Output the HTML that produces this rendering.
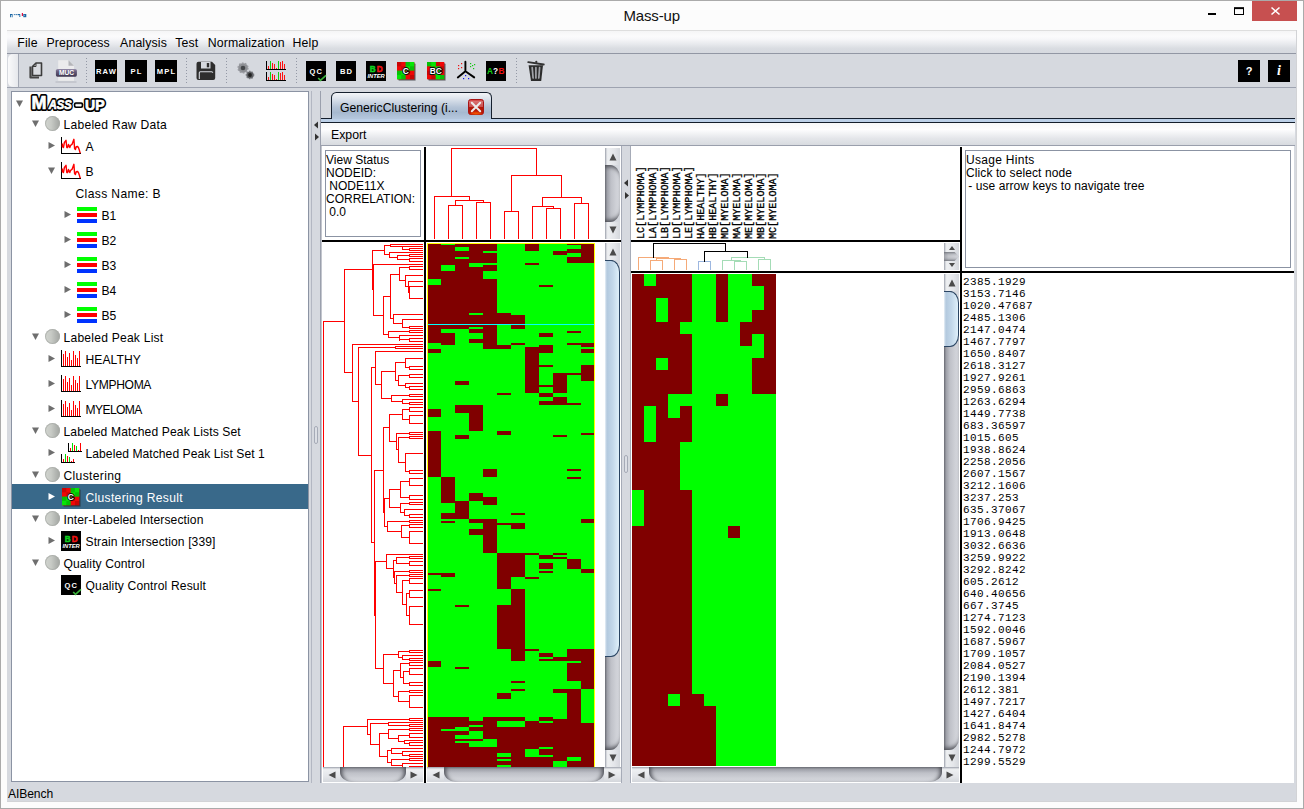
<!DOCTYPE html><html><head><meta charset="utf-8"><title>Mass-up</title><style>
*{box-sizing:border-box;margin:0;padding:0}
html,body{width:1304px;height:809px;overflow:hidden}
body{background:#fcfcfc;font-family:"Liberation Sans",sans-serif;font-size:12px;color:#000;position:relative}
.abs{position:absolute}
.t{position:absolute;white-space:pre;line-height:14px;font-size:12.1px}
</style></head><body>
<div class="abs" style="left:0px;top:0px;width:1304px;height:809px;border:1px solid #aaaaaa;"></div>
<div class="t" style="left:623.4px;top:7.5px;font-size:15px;line-height:16px;color:#111;letter-spacing:-.15px">Mass-up</div>
<div class="abs" style="left:1252px;top:1px;width:45px;height:20px;background:#c75050"></div>
<svg class="abs" style="left:1205px;top:0" width="95" height="24"><path d="M3 14h8" stroke="#000" stroke-width="2"/><rect x="29.500" y="8" width="9" height="6.500" fill="none" stroke="#000" stroke-width="1"/><path d="M29 8.200h10" stroke="#000" stroke-width="1.800"/><path d="M66.500 7.500l8 7m0 -7l-8 7" stroke="#fff" stroke-width="1.6"/></svg>
<svg class="abs" style="left:9px;top:12px" width="19" height="7"><g fill="#1a66a4"><path d="M1 2h2.600v3.200h-.9v-2.300h-.8v2.300h-.9z"/><rect x="4.800" y="2" width="1.600" height="1.100" opacity=".75"/><rect x="6.800" y="2" width="1.600" height="1.100" opacity=".8"/><rect x="8.800" y="2" width="2.400" height="1.200"/><rect x="10.200" y="3.200" width="1.200" height="1.800" opacity=".8"/><rect x="14.300" y="2" width="3" height="3.200"/></g><rect x="14.900" y="2.900" width=".8" height="1.200" fill="#9cc4e4"/><rect x="12.800" y="1" width="1.200" height="3" fill="#e01040"/></svg>
<div class="abs" style="left:7px;top:30px;width:1290px;height:772px;background:#d6d9df;border-right:1px solid #d2d3d6;border-bottom:1px solid #d2d3d6"></div>
<div class="abs" style="left:7px;top:30px;width:1289px;height:23px;background:linear-gradient(#f5f5f6 0%,#fbfbfc 24%,#f7f7f9 36%,#e7e9ed 60%,#d9dce1 80%,#d6d9df 100%);border-top:1px solid #dedede"></div>
<div class="abs" style="left:7px;top:53px;width:1289px;height:1px;background:#9297a4"></div>
<div class="t" style="left:17.3px;top:36px;font-size:12.3px;letter-spacing:.13px">File</div>
<div class="t" style="left:46.4px;top:36px;font-size:12.3px;letter-spacing:.13px">Preprocess</div>
<div class="t" style="left:120.1px;top:36px;font-size:12.3px;letter-spacing:.13px">Analysis</div>
<div class="t" style="left:175.2px;top:36px;font-size:12.3px;letter-spacing:.13px">Test</div>
<div class="t" style="left:207.8px;top:36px;font-size:12.3px;letter-spacing:.13px">Normalization</div>
<div class="t" style="left:292.6px;top:36px;font-size:12.3px;letter-spacing:.13px">Help</div>
<div class="abs" style="left:7px;top:54px;width:1289px;height:33px;background:#d6d9df"></div>
<div class="abs" style="left:7px;top:87px;width:1289px;height:1px;background:#9ea3b0"></div>
<div class="abs" style="left:8px;top:54px;width:11px;height:33px;border-radius:5px 0 0 5px;background:linear-gradient(90deg,#fafafb,#e6e8ec);border-right:1px solid #a3a8b4"></div>
<svg class="abs" style="left:27px;top:60px" width="18" height="20" viewBox="0 0 18 20"><path d="M3.500 6.500v11h8.500" fill="none" stroke="#444" stroke-width="2.200" stroke-linejoin="round"/><path d="M5.500 15.500v-9l3.500 -3.500h5.500v12.500z" fill="#d9dbe0" stroke="#3c3c3c" stroke-width="1.600" stroke-linejoin="round"/><path d="M5.500 6.500h3.500v-3.500" fill="none" stroke="#3c3c3c" stroke-width="1"/></svg>
<svg class="abs" style="left:54px;top:59px" width="24" height="24" viewBox="0 0 24 24"><defs><linearGradient id="mb" x1="0" y1="0" x2="0" y2="1"><stop offset="0" stop-color="#9a92ae"/><stop offset=".3" stop-color="#6a607e"/><stop offset="1" stop-color="#3e3650"/></linearGradient></defs><path d="M4.200 1.200h10.300l5.500 5.500v15h-15.800z" fill="#ececed"/><path d="M14.500 1.200v5.500h5.500z" fill="#b4b5b9"/><rect x="1.900" y="9.900" width="21" height="7.800" rx="1.600" fill="url(#mb)"/><text x="5" y="16.200" font-family="Liberation Sans" font-weight="bold" font-size="6.600" fill="#fff" textLength="15" lengthAdjust="spacing">MUC</text><path d="M1.500 23h21" stroke="#b4b6be" stroke-width="1"/></svg>
<div class="abs" style="left:86px;top:58px;width:1px;height:26px;background:repeating-linear-gradient(#9499a6 0 1px,transparent 1px 3px)"></div>
<svg class="abs" style="left:95px;top:60px" width="22" height="22"><rect width="22" height="22" fill="#000"/><text x="1.0" y="14" font-family="Liberation Sans" font-weight="bold" font-size="7.6" fill="#fff" textLength="20" lengthAdjust="spacing">RAW</text></svg>
<svg class="abs" style="left:125px;top:60px" width="22" height="22"><rect width="22" height="22" fill="#000"/><text x="5.5" y="14" font-family="Liberation Sans" font-weight="bold" font-size="7.6" fill="#fff" textLength="11" lengthAdjust="spacing">PL</text></svg>
<svg class="abs" style="left:155px;top:60px" width="22" height="22"><rect width="22" height="22" fill="#000"/><text x="1.75" y="14" font-family="Liberation Sans" font-weight="bold" font-size="7.6" fill="#fff" textLength="18.5" lengthAdjust="spacing">MPL</text></svg>
<div class="abs" style="left:186px;top:58px;width:1px;height:26px;background:repeating-linear-gradient(#9499a6 0 1px,transparent 1px 3px)"></div>
<svg class="abs" style="left:196px;top:61px" width="20" height="20" viewBox="0 0 20 20"><path d="M2.500 .800h13.500l3.200 3.200v13a2 2 0 0 1 -2 2h-14.700a2 2 0 0 1 -2 -2v-14.200a2 2 0 0 1 2 -2z" fill="#2e2e2e"/><rect x="5" y="1" width="9.500" height="6.500" fill="#d6d9df"/><rect x="10.800" y="2" width="2.400" height="4.300" fill="#2e2e2e"/><path d="M3.300 18v-6.200a1 1 0 0 1 1 -1h11.400a1 1 0 0 1 1 1" fill="none" stroke="#d6d9df" stroke-width="1.100"/></svg>
<div class="abs" style="left:226px;top:58px;width:1px;height:26px;background:repeating-linear-gradient(#9499a6 0 1px,transparent 1px 3px)"></div>
<svg class="abs" style="left:236px;top:61px" width="20" height="20" viewBox="0 0 20 20"><circle cx="7" cy="7" r="4.800" fill="#8d8f94" stroke="#9a9ca2" stroke-width="1.600" stroke-dasharray="1.600 1.400"/><circle cx="7" cy="7" r="2.300" fill="#44464a"/><circle cx="14" cy="14" r="3.600" fill="#5a5c60" stroke="#77797e" stroke-width="1.400" stroke-dasharray="1.400 1.200"/><circle cx="14" cy="14" r="1.900" fill="#222"/></svg>
<svg class="abs" style="left:265px;top:60px" width="22" height="22" viewBox="0 0 22 22" shape-rendering="crispEdges"><path d="M1.500 1v8.500h19.500" fill="none" stroke="#000" stroke-width="1"/><rect x="3" y="6" width="1.300" height="3" fill="#ff1010"/><rect x="5" y="1" width="1.300" height="8" fill="#10d010"/><rect x="7" y="3" width="1.300" height="6" fill="#ff1010"/><rect x="9" y="4" width="1.300" height="5" fill="#ff1010"/><rect x="11" y="8" width="1.300" height="1" fill="#ff1010"/><rect x="13" y="1" width="1.300" height="8" fill="#10d010"/><rect x="15" y="2" width="1.300" height="7" fill="#ff1010"/><rect x="17" y="1" width="1.300" height="8" fill="#ff1010"/><rect x="19" y="4" width="1.300" height="5" fill="#ff1010"/><path d="M1.500 12v8.500h19.500" fill="none" stroke="#000" stroke-width="1"/><rect x="3" y="17" width="1.300" height="3" fill="#ff1010"/><rect x="5" y="12" width="1.300" height="8" fill="#10d010"/><rect x="7" y="14" width="1.300" height="6" fill="#ff1010"/><rect x="9" y="15" width="1.300" height="5" fill="#ff1010"/><rect x="11" y="19" width="1.300" height="1" fill="#ff1010"/><rect x="13" y="12" width="1.300" height="8" fill="#10d010"/><rect x="15" y="13" width="1.300" height="7" fill="#ff1010"/><rect x="17" y="12" width="1.300" height="8" fill="#ff1010"/><rect x="19" y="15" width="1.300" height="5" fill="#ff1010"/></svg>
<div class="abs" style="left:296px;top:58px;width:1px;height:26px;background:repeating-linear-gradient(#9499a6 0 1px,transparent 1px 3px)"></div>
<svg class="abs" style="left:306px;top:61px" width="22" height="22" viewBox="0 0 22 22"><rect width="20" height="20" fill="#000"/><text x="10.3" y="13" font-family="Liberation Sans" font-weight="bold" font-size="7.5" fill="#fff" text-anchor="middle" letter-spacing="1.2">QC</text><path d="M12.200 17l2.300 2.300l5.500 -5" stroke="#3cb43c" stroke-width="1.600" fill="none"/></svg>
<svg class="abs" style="left:336px;top:61px" width="20" height="20"><rect width="20" height="20" fill="#000"/><text x="4.0" y="13" font-family="Liberation Sans" font-weight="bold" font-size="7.6" fill="#fff" textLength="12" lengthAdjust="spacing">BD</text></svg>
<svg class="abs" style="left:366px;top:61px" width="20" height="20" viewBox="0 0 20 20"><rect width="20" height="20" fill="#000"/><text x="3.800" y="10.800" font-family="Liberation Sans" font-weight="bold" font-size="8.200" fill="#10d020" stroke="#10d020" stroke-width=".5">B</text><text x="10.800" y="10.800" font-family="Liberation Sans" font-weight="bold" font-size="8.200" fill="#f01414" stroke="#f01414" stroke-width=".5">D</text><text x="1.600" y="17.200" font-family="Liberation Sans" font-weight="bold" font-style="italic" font-size="5.800" fill="#fff" textLength="17" lengthAdjust="spacing">INTER</text></svg>
<svg class="abs" style="left:397px;top:62px" width="20" height="20" viewBox="0 0 20 20"><rect x="1.800" y="1.800" width="17" height="17" rx=".5" fill="#26262a" opacity=".35"/><rect x="1.200" y="1.200" width="17" height="17" rx=".5" fill="#26262a" opacity=".55"/><rect x="0" y="0" width="17.300" height="17.300" fill="#f00606"/><rect x="8.600" y="0" width="8.700" height="8.600" fill="#06e606"/><rect x="0" y="8.600" width="8.600" height="8.700" fill="#06e606"/><g opacity=".16" fill="#000"><rect x="0" y="0" width="4.300" height="4.300"/><rect x="4.300" y="4.300" width="4.300" height="4.300"/><rect x="8.600" y="0" width="4.300" height="4.300"/><rect x="13" y="4.300" width="4.300" height="4.300"/><rect x="0" y="8.600" width="4.300" height="4.300"/><rect x="4.300" y="13" width="4.300" height="4.300"/><rect x="8.600" y="8.600" width="4.300" height="4.300"/><rect x="13" y="13" width="4.300" height="4.300"/></g><text x="8.700" y="12" font-family="Liberation Sans" font-weight="bold" font-size="8.500" fill="#fff" stroke="#0a0a0a" stroke-width="1.800" paint-order="stroke" text-anchor="middle">C</text></svg>
<svg class="abs" style="left:427px;top:62px" width="20" height="20" viewBox="0 0 20 20"><rect x="1.800" y="1.800" width="17" height="17" rx=".5" fill="#26262a" opacity=".35"/><rect x="1.200" y="1.200" width="17" height="17" rx=".5" fill="#26262a" opacity=".55"/><rect x="0" y="0" width="17.300" height="17.300" fill="#f00606"/><rect x="0" y="0" width="9" height="4.300" fill="#06e606"/><rect x="4" y="4.300" width="9.300" height="8.700" fill="#06e606"/><rect x="8.600" y="13" width="8.700" height="4.300" fill="#06e606"/><g opacity=".16" fill="#000"><rect x="0" y="0" width="4.300" height="4.300"/><rect x="8.600" y="0" width="4.300" height="4.300"/><rect x="4.300" y="4.300" width="4.300" height="4.300"/><rect x="13" y="4.300" width="4.300" height="4.300"/><rect x="0" y="8.600" width="4.300" height="4.300"/><rect x="8.600" y="8.600" width="4.300" height="4.300"/><rect x="4.300" y="13" width="4.300" height="4.300"/><rect x="13" y="13" width="4.300" height="4.300"/></g><text x="2.800" y="12.200" font-family="Liberation Sans" font-weight="bold" font-size="8.500" fill="#fff" stroke="#0a0a0a" stroke-width="1.800" paint-order="stroke" textLength="12" lengthAdjust="spacing">BC</text></svg>
<svg class="abs" style="left:456px;top:60px" width="21" height="21" viewBox="0 0 21 21"><path d="M9.400 1.700v9.500M9.400 11.200l-7.600 6.200M9.400 11.200l8.800 6.200" stroke="#000" stroke-width="1.900" fill="none" stroke-linecap="round"/><g fill="#f01010"><rect x="2" y="5" width="1.200" height="1.200"/><rect x="5" y="3" width="1.200" height="1.200"/><rect x="2" y="8" width="1.200" height="1.200"/><rect x="5" y="7" width="1.200" height="1.200"/></g><g fill="#10c810"><rect x="14" y="3" width="1.200" height="1.200"/><rect x="18" y="4" width="1.200" height="1.200"/><rect x="14" y="6" width="1.200" height="1.200"/><rect x="16" y="5" width="1.200" height="1.200"/><rect x="17" y="8" width="1.200" height="1.200"/></g><g fill="#1010f0"><rect x="9" y="15" width="1.200" height="1.200"/><rect x="7" y="18" width="1.200" height="1.200"/><rect x="12" y="18" width="1.200" height="1.200"/></g></svg>
<svg class="abs" style="left:486px;top:61px" width="20" height="20" viewBox="0 0 20 20"><rect width="20" height="20" fill="#000"/><text x="1" y="13.200" font-family="Liberation Sans" font-weight="bold" font-size="8.300" fill="#10d010">A</text><text x="7.100" y="13.200" font-family="Liberation Sans" font-weight="bold" font-size="8.300" fill="#fff">?</text><text x="12.400" y="13.200" font-family="Liberation Sans" font-weight="bold" font-size="8.300" fill="#f01010">B</text></svg>
<div class="abs" style="left:516px;top:58px;width:1px;height:26px;background:repeating-linear-gradient(#9499a6 0 1px,transparent 1px 3px)"></div>
<svg class="abs" style="left:527px;top:60px" width="18" height="22" viewBox="0 0 18 22"><path d="M1.600 5.300h14.400l-1.800 15.600h-10.200z" fill="#2c2c2c"/><path d="M5.200 7.600l.9 10.400M8.900 7.600v10.400M12.600 7.600l-.8 10.400" stroke="#a2a4a9" stroke-width="1.700" stroke-linecap="round"/><path d="M1.200 2.200l15.600 2.300" stroke="#333" stroke-width="1.800" stroke-linecap="round"/><circle cx="9.300" cy="1.900" r="1.100" fill="#333"/></svg>
<svg class="abs" style="left:1238px;top:60px" width="22" height="22"><rect width="22" height="22" fill="#000"/><text x="7.65" y="15" font-family="Liberation Sans" font-weight="bold" font-size="11" fill="#fff" textLength="6.7" lengthAdjust="spacing">?</text></svg>
<div class="abs" style="left:1268px;top:60px;width:22px;height:22px;background:#000;color:#fff;font-family:'Liberation Serif',serif;font-weight:bold;font-style:italic;font-size:14px;line-height:21px;text-align:center">i</div>
<div class="abs" style="left:11px;top:91px;width:298px;height:691px;background:#fff;border:1px solid #8b93a3"></div>
<svg class="abs" style="left:16px;top:100px" width="8" height="8"><path d="M0 .5h7l-3.500 6.500z" fill="#6e6e6e"/></svg>
<svg class="abs" style="left:28px;top:92px" width="82" height="24" viewBox="0 0 82 24"><g font-family="Liberation Sans" font-weight="bold" fill="#000" stroke="#000" stroke-width="4" stroke-linejoin="round"><text x="3.600" y="17.300" font-size="19" textLength="15" lengthAdjust="spacingAndGlyphs">M</text><text x="20.800" y="17.300" font-size="13.500" font-style="italic" textLength="23" lengthAdjust="spacingAndGlyphs">ASS</text><rect x="47.800" y="12.300" width="5.400" height="1.800"/><text x="57" y="17.700" font-size="14.200" textLength="19.500" lengthAdjust="spacingAndGlyphs">UP</text></g><g font-family="Liberation Sans" font-weight="bold" fill="#fff" stroke="#fff" stroke-width=".7" stroke-linejoin="round"><text x="3.600" y="17.300" font-size="19" textLength="15" lengthAdjust="spacingAndGlyphs">M</text><text x="20.800" y="17.300" font-size="13.500" font-style="italic" textLength="23" lengthAdjust="spacingAndGlyphs">ASS</text><rect x="47.800" y="12.300" width="5.400" height="1.800"/><text x="57" y="17.700" font-size="14.200" textLength="19.500" lengthAdjust="spacingAndGlyphs">UP</text></g></svg>
<svg class="abs" style="left:32px;top:120px" width="8" height="8"><path d="M0 .5h7l-3.500 6.500z" fill="#6e6e6e"/></svg>
<div class="abs" style="left:44.5px;top:116.2px;width:15px;height:15px;border-radius:50%;background:linear-gradient(90deg,#d0d3ce 0%,#c8cbc6 40%,#b4b7b3 70%,#a2a5a1 100%);box-shadow:inset 0 0 0 1px rgba(168,171,167,.75)"></div>
<div class="t" style="left:63.5px;top:118px;color:#000;letter-spacing:0.25px">Labeled Raw Data</div>
<svg class="abs" style="left:48px;top:142px" width="8" height="8"><path d="M.5 0v7l6.500 -3.500z" fill="#6e6e6e"/></svg>
<svg class="abs" style="left:61px;top:137px" width="21" height="18" viewBox="0 0 21 18"><path d="M.5 0v16.500h19.500" fill="none" stroke="#000" stroke-width="1" shape-rendering="crispEdges"/><path d="M1.300 6.500v3l1.100 1l1 -5l1.600 -2.200l.8 7.200h.8l.9 -3l1.300 3l.7 -2l1.700 -1.400l.7 -2l1 -2.800l.7 9.200l.8 1l.8 -2.700l1.400 -.3l1 1.400l.7 2l.7 2.700h.8" fill="none" stroke="#ff0000" stroke-width="1.400" stroke-linejoin="round"/></svg>
<div class="t" style="left:85.5px;top:140px;color:#000;letter-spacing:0px">A</div>
<svg class="abs" style="left:48px;top:167px" width="8" height="8"><path d="M0 .5h7l-3.500 6.500z" fill="#6e6e6e"/></svg>
<svg class="abs" style="left:61px;top:162px" width="21" height="18" viewBox="0 0 21 18"><path d="M.5 0v16.500h19.500" fill="none" stroke="#000" stroke-width="1" shape-rendering="crispEdges"/><path d="M1.300 6.500v3l1.100 1l1 -5l1.600 -2.200l.8 7.200h.8l.9 -3l1.300 3l.7 -2l1.700 -1.400l.7 -2l1 -2.800l.7 9.200l.8 1l.8 -2.700l1.400 -.3l1 1.400l.7 2l.7 2.700h.8" fill="none" stroke="#ff0000" stroke-width="1.400" stroke-linejoin="round"/></svg>
<div class="t" style="left:85.5px;top:165px;color:#000;letter-spacing:0px">B</div>
<div class="t" style="left:75.5px;top:187px;color:#000;letter-spacing:0.37px">Class Name: B</div>
<svg class="abs" style="left:64px;top:211px" width="8" height="8"><path d="M.5 0v7l6.500 -3.500z" fill="#6e6e6e"/></svg>
<svg class="abs" style="left:77px;top:207px" width="20" height="16" shape-rendering="crispEdges"><rect x="0" y="0" width="20" height="4" fill="#00ff00"/><rect x="0" y="6" width="20" height="4" fill="#ff0000"/><rect x="0" y="12" width="20" height="4" fill="#0033ff"/></svg>
<div class="t" style="left:101.5px;top:209px;color:#000;letter-spacing:0px">B1</div>
<svg class="abs" style="left:64px;top:236px" width="8" height="8"><path d="M.5 0v7l6.500 -3.500z" fill="#6e6e6e"/></svg>
<svg class="abs" style="left:77px;top:232px" width="20" height="16" shape-rendering="crispEdges"><rect x="0" y="0" width="20" height="4" fill="#00ff00"/><rect x="0" y="6" width="20" height="4" fill="#ff0000"/><rect x="0" y="12" width="20" height="4" fill="#0033ff"/></svg>
<div class="t" style="left:101.5px;top:234px;color:#000;letter-spacing:0px">B2</div>
<svg class="abs" style="left:64px;top:261px" width="8" height="8"><path d="M.5 0v7l6.500 -3.500z" fill="#6e6e6e"/></svg>
<svg class="abs" style="left:77px;top:257px" width="20" height="16" shape-rendering="crispEdges"><rect x="0" y="0" width="20" height="4" fill="#00ff00"/><rect x="0" y="6" width="20" height="4" fill="#ff0000"/><rect x="0" y="12" width="20" height="4" fill="#0033ff"/></svg>
<div class="t" style="left:101.5px;top:259px;color:#000;letter-spacing:0px">B3</div>
<svg class="abs" style="left:64px;top:286px" width="8" height="8"><path d="M.5 0v7l6.500 -3.500z" fill="#6e6e6e"/></svg>
<svg class="abs" style="left:77px;top:282px" width="20" height="16" shape-rendering="crispEdges"><rect x="0" y="0" width="20" height="4" fill="#00ff00"/><rect x="0" y="6" width="20" height="4" fill="#ff0000"/><rect x="0" y="12" width="20" height="4" fill="#0033ff"/></svg>
<div class="t" style="left:101.5px;top:284px;color:#000;letter-spacing:0px">B4</div>
<svg class="abs" style="left:64px;top:311px" width="8" height="8"><path d="M.5 0v7l6.500 -3.500z" fill="#6e6e6e"/></svg>
<svg class="abs" style="left:77px;top:307px" width="20" height="16" shape-rendering="crispEdges"><rect x="0" y="0" width="20" height="4" fill="#00ff00"/><rect x="0" y="6" width="20" height="4" fill="#ff0000"/><rect x="0" y="12" width="20" height="4" fill="#0033ff"/></svg>
<div class="t" style="left:101.5px;top:309px;color:#000;letter-spacing:0px">B5</div>
<svg class="abs" style="left:32px;top:333px" width="8" height="8"><path d="M0 .5h7l-3.500 6.500z" fill="#6e6e6e"/></svg>
<div class="abs" style="left:44.5px;top:329.2px;width:15px;height:15px;border-radius:50%;background:linear-gradient(90deg,#d0d3ce 0%,#c8cbc6 40%,#b4b7b3 70%,#a2a5a1 100%);box-shadow:inset 0 0 0 1px rgba(168,171,167,.75)"></div>
<div class="t" style="left:63.5px;top:331px;color:#000;letter-spacing:0.22px">Labeled Peak List</div>
<svg class="abs" style="left:48px;top:355px" width="8" height="8"><path d="M.5 0v7l6.500 -3.500z" fill="#6e6e6e"/></svg>
<svg class="abs" style="left:61px;top:350px" width="21" height="18" viewBox="0 0 21 18" shape-rendering="crispEdges"><path d="M.5 0v16.500h19.500" fill="none" stroke="#000" stroke-width="1"/><rect x="2" y="4" width="1" height="12" fill="#ff0000"/><rect x="4" y="1" width="1" height="15" fill="#ff0000"/><rect x="6" y="7" width="1" height="9" fill="#ff0000"/><rect x="8" y="3" width="1" height="13" fill="#ff0000"/><rect x="10" y="10" width="1" height="6" fill="#ff0000"/><rect x="12" y="1" width="1" height="15" fill="#ff0000"/><rect x="14" y="5" width="1" height="11" fill="#ff0000"/><rect x="16" y="8" width="1" height="8" fill="#ff0000"/><rect x="18" y="1" width="1" height="15" fill="#ff0000"/></svg>
<div class="t" style="left:85.5px;top:353px;color:#000;letter-spacing:0.06px">HEALTHY</div>
<svg class="abs" style="left:48px;top:380px" width="8" height="8"><path d="M.5 0v7l6.500 -3.500z" fill="#6e6e6e"/></svg>
<svg class="abs" style="left:61px;top:375px" width="21" height="18" viewBox="0 0 21 18" shape-rendering="crispEdges"><path d="M.5 0v16.500h19.500" fill="none" stroke="#000" stroke-width="1"/><rect x="2" y="4" width="1" height="12" fill="#ff0000"/><rect x="4" y="1" width="1" height="15" fill="#ff0000"/><rect x="6" y="7" width="1" height="9" fill="#ff0000"/><rect x="8" y="3" width="1" height="13" fill="#ff0000"/><rect x="10" y="10" width="1" height="6" fill="#ff0000"/><rect x="12" y="1" width="1" height="15" fill="#ff0000"/><rect x="14" y="5" width="1" height="11" fill="#ff0000"/><rect x="16" y="8" width="1" height="8" fill="#ff0000"/><rect x="18" y="1" width="1" height="15" fill="#ff0000"/></svg>
<div class="t" style="left:85.5px;top:378px;color:#000;letter-spacing:-0.34px">LYMPHOMA</div>
<svg class="abs" style="left:48px;top:405px" width="8" height="8"><path d="M.5 0v7l6.500 -3.500z" fill="#6e6e6e"/></svg>
<svg class="abs" style="left:61px;top:400px" width="21" height="18" viewBox="0 0 21 18" shape-rendering="crispEdges"><path d="M.5 0v16.500h19.500" fill="none" stroke="#000" stroke-width="1"/><rect x="2" y="4" width="1" height="12" fill="#ff0000"/><rect x="4" y="1" width="1" height="15" fill="#ff0000"/><rect x="6" y="7" width="1" height="9" fill="#ff0000"/><rect x="8" y="3" width="1" height="13" fill="#ff0000"/><rect x="10" y="10" width="1" height="6" fill="#ff0000"/><rect x="12" y="1" width="1" height="15" fill="#ff0000"/><rect x="14" y="5" width="1" height="11" fill="#ff0000"/><rect x="16" y="8" width="1" height="8" fill="#ff0000"/><rect x="18" y="1" width="1" height="15" fill="#ff0000"/></svg>
<div class="t" style="left:85.5px;top:403px;color:#000;letter-spacing:-0.6px">MYELOMA</div>
<svg class="abs" style="left:32px;top:427px" width="8" height="8"><path d="M0 .5h7l-3.500 6.500z" fill="#6e6e6e"/></svg>
<div class="abs" style="left:44.5px;top:423.2px;width:15px;height:15px;border-radius:50%;background:linear-gradient(90deg,#d0d3ce 0%,#c8cbc6 40%,#b4b7b3 70%,#a2a5a1 100%);box-shadow:inset 0 0 0 1px rgba(168,171,167,.75)"></div>
<div class="t" style="left:63.5px;top:425px;color:#000;letter-spacing:0.13px">Labeled Matched Peak Lists Set</div>
<svg class="abs" style="left:48px;top:449px" width="8" height="8"><path d="M.5 0v7l6.500 -3.500z" fill="#6e6e6e"/></svg>
<svg class="abs" style="left:61px;top:443px" width="22" height="21" viewBox="0 0 22 21" shape-rendering="crispEdges"><path d="M7.5 0v8.500h13" fill="none" stroke="#000" stroke-width="1"/><rect x="9" y="5" width="1" height="3" fill="#ff0000"/><rect x="11" y="0" width="1" height="8" fill="#00e000"/><rect x="13" y="2" width="1" height="6" fill="#ff0000"/><rect x="15" y="3" width="1" height="5" fill="#00e000"/><rect x="17" y="7" width="1" height="1" fill="#ff0000"/><rect x="19" y="0" width="1" height="8" fill="#ff0000"/><path d="M0.5 11v8.500h13" fill="none" stroke="#000" stroke-width="1"/><rect x="2" y="16" width="1" height="3" fill="#ff0000"/><rect x="4" y="11" width="1" height="8" fill="#00e000"/><rect x="6" y="13" width="1" height="6" fill="#ff0000"/><rect x="8" y="14" width="1" height="5" fill="#00e000"/><rect x="10" y="18" width="1" height="1" fill="#ff0000"/><rect x="12" y="16" width="1" height="3" fill="#ff0000"/></svg>
<div class="t" style="left:85.5px;top:447px;color:#000;letter-spacing:0.06px">Labeled Matched Peak List Set 1</div>
<svg class="abs" style="left:32px;top:471px" width="8" height="8"><path d="M0 .5h7l-3.500 6.500z" fill="#6e6e6e"/></svg>
<div class="abs" style="left:44.5px;top:467.2px;width:15px;height:15px;border-radius:50%;background:linear-gradient(90deg,#d0d3ce 0%,#c8cbc6 40%,#b4b7b3 70%,#a2a5a1 100%);box-shadow:inset 0 0 0 1px rgba(168,171,167,.75)"></div>
<div class="t" style="left:63.5px;top:469px;color:#000;letter-spacing:0.34px">Clustering</div>
<div class="abs" style="left:12px;top:484px;width:296px;height:25px;background:#39698a"></div>
<svg class="abs" style="left:48px;top:493px" width="8" height="8"><path d="M.5 0v7l6.500 -3.500z" fill="#fff"/></svg>
<svg class="abs" style="left:62px;top:488px" width="20" height="20" viewBox="0 0 20 20"><rect x="1.800" y="1.800" width="17" height="17" rx=".5" fill="#26262a" opacity=".35"/><rect x="1.200" y="1.200" width="17" height="17" rx=".5" fill="#26262a" opacity=".55"/><rect x="0" y="0" width="17.300" height="17.300" fill="#f00606"/><rect x="8.600" y="0" width="8.700" height="8.600" fill="#06e606"/><rect x="0" y="8.600" width="8.600" height="8.700" fill="#06e606"/><g opacity=".16" fill="#000"><rect x="0" y="0" width="4.300" height="4.300"/><rect x="4.300" y="4.300" width="4.300" height="4.300"/><rect x="8.600" y="0" width="4.300" height="4.300"/><rect x="13" y="4.300" width="4.300" height="4.300"/><rect x="0" y="8.600" width="4.300" height="4.300"/><rect x="4.300" y="13" width="4.300" height="4.300"/><rect x="8.600" y="8.600" width="4.300" height="4.300"/><rect x="13" y="13" width="4.300" height="4.300"/></g><text x="8.700" y="12" font-family="Liberation Sans" font-weight="bold" font-size="8.500" fill="#fff" stroke="#0a0a0a" stroke-width="1.800" paint-order="stroke" text-anchor="middle">C</text></svg>
<div class="t" style="left:85.5px;top:491px;color:#fff;letter-spacing:0.31px">Clustering Result</div>
<svg class="abs" style="left:32px;top:515px" width="8" height="8"><path d="M0 .5h7l-3.500 6.500z" fill="#6e6e6e"/></svg>
<div class="abs" style="left:44.5px;top:511.2px;width:15px;height:15px;border-radius:50%;background:linear-gradient(90deg,#d0d3ce 0%,#c8cbc6 40%,#b4b7b3 70%,#a2a5a1 100%);box-shadow:inset 0 0 0 1px rgba(168,171,167,.75)"></div>
<div class="t" style="left:63.5px;top:513px;color:#000;letter-spacing:0.11px">Inter-Labeled Intersection</div>
<svg class="abs" style="left:48px;top:537px" width="8" height="8"><path d="M.5 0v7l6.500 -3.500z" fill="#6e6e6e"/></svg>
<svg class="abs" style="left:61px;top:531px" width="20" height="20" viewBox="0 0 20 20"><rect width="20" height="20" fill="#000"/><text x="3.800" y="10.800" font-family="Liberation Sans" font-weight="bold" font-size="8.200" fill="#10d020" stroke="#10d020" stroke-width=".5">B</text><text x="10.800" y="10.800" font-family="Liberation Sans" font-weight="bold" font-size="8.200" fill="#f01414" stroke="#f01414" stroke-width=".5">D</text><text x="1.600" y="17.200" font-family="Liberation Sans" font-weight="bold" font-style="italic" font-size="5.800" fill="#fff" textLength="17" lengthAdjust="spacing">INTER</text></svg>
<div class="t" style="left:85.5px;top:535px;color:#000;letter-spacing:0.09px">Strain Intersection [339]</div>
<svg class="abs" style="left:32px;top:559px" width="8" height="8"><path d="M0 .5h7l-3.500 6.500z" fill="#6e6e6e"/></svg>
<div class="abs" style="left:44.5px;top:555.2px;width:15px;height:15px;border-radius:50%;background:linear-gradient(90deg,#d0d3ce 0%,#c8cbc6 40%,#b4b7b3 70%,#a2a5a1 100%);box-shadow:inset 0 0 0 1px rgba(168,171,167,.75)"></div>
<div class="t" style="left:63.5px;top:557px;color:#000;letter-spacing:0.08px">Quality Control</div>
<svg class="abs" style="left:61px;top:575px" width="22" height="22" viewBox="0 0 22 22"><rect width="20" height="20" fill="#000"/><text x="10.3" y="13" font-family="Liberation Sans" font-weight="bold" font-size="7.5" fill="#fff" text-anchor="middle" letter-spacing="1.2">QC</text><path d="M12.200 17l2.300 2.300l5.500 -5" stroke="#3cb43c" stroke-width="1.600" fill="none"/></svg>
<div class="t" style="left:85.5px;top:579px;color:#000;letter-spacing:0.13px">Quality Control Result</div>
<div class="abs" style="left:311px;top:91px;width:1px;height:692px;background:#b3b7c2"></div>
<div class="abs" style="left:320px;top:91px;width:1px;height:692px;background:#9ba0ad"></div>
<svg class="abs" style="left:313px;top:120px" width="7" height="22"><path d="M5.0 1.5v7l-4 -3.5z" fill="#333"/><path d="M2.0 13.5v7l4 -3.5z" fill="#333"/></svg>
<div class="abs" style="left:314px;top:426px;width:4px;height:18px;border:1px solid #a6abb7;border-radius:2px;background:#dcdfe5"></div>
<div class="abs" style="left:321px;top:118px;width:974px;height:1px;background:#141e2c"></div>
<div class="abs" style="left:321px;top:119px;width:974px;height:3px;background:#bcd0e8"></div>
<div class="abs" style="left:321px;top:122px;width:974px;height:1px;background:#141e2c"></div>
<div class="abs" style="left:331px;top:92px;width:161px;height:27px;border:1.500px solid #16202e;border-bottom:none;border-radius:5.500px 5.500px 0 0;background:linear-gradient(#f3f5f8 0,#dfe5ed 20%,#b4c3d6 55%,#a6b9d0 75%,#b6c8de 100%)"></div>
<div class="t" style="left:340px;top:101px;font-size:12.2px">GenericClustering (i...</div>
<svg class="abs" style="left:467px;top:98px" width="18" height="18" viewBox="0 0 18 18"><defs><linearGradient id="cg" x1="0" y1="0" x2="0" y2="1"><stop offset="0" stop-color="#d01c1c"/><stop offset=".12" stop-color="#d87070"/><stop offset=".48" stop-color="#c85050"/><stop offset=".52" stop-color="#b01808"/><stop offset="1" stop-color="#b81808"/></linearGradient><radialGradient id="cr" cx=".5" cy="1" r=".55"><stop offset="0" stop-color="#ff6a00"/><stop offset=".6" stop-color="#f04800" stop-opacity=".7"/><stop offset="1" stop-color="#c01808" stop-opacity="0"/></radialGradient></defs><rect x="1.500" y="1.500" width="15" height="15" rx="2.200" fill="url(#cg)" stroke="#a81414" stroke-width="1"/><rect x="2" y="9" width="14" height="7.500" rx="1.500" fill="url(#cr)"/><path d="M4.800 4.800l8.400 8.400m0 -8.400l-8.400 8.400" stroke="#ececec" stroke-width="2" stroke-linecap="round"/></svg>
<div class="abs" style="left:321px;top:123px;width:974px;height:22px;background:linear-gradient(#f7f8f9 0,#fdfdfe 30%,#e4e6ea 70%,#d8dbe0 100%)"></div>
<div class="abs" style="left:321px;top:145px;width:974px;height:1px;background:#9a9fac"></div>
<div class="t" style="left:331px;top:128px;font-size:12.3px">Export</div>
<div class="abs" style="left:321px;top:146px;width:973px;height:637px;background:#fff"></div>
<div class="abs" style="left:321px;top:146px;width:1px;height:637px;background:#c3c6ce"></div>
<div class="abs" style="left:621px;top:146px;width:10px;height:637px;background:#d6d9df;border-left:1px solid #a6abb7;border-right:1px solid #a6abb7"></div>
<svg class="abs" style="left:623px;top:178px" width="7" height="22"><path d="M5.0 1.5v7l-4 -3.5z" fill="#333"/><path d="M2.0 14.0v7l4 -3.5z" fill="#333"/></svg>
<div class="abs" style="left:624px;top:455px;width:4px;height:18px;border:1px solid #a6abb7;border-radius:2px;background:#dcdfe5"></div>
<div class="abs" style="left:424px;top:147px;width:2px;height:636px;background:#000"></div>
<div class="abs" style="left:322px;top:240px;width:299px;height:2px;background:#000"></div>
<div class="abs" style="left:631px;top:240px;width:331px;height:2px;background:#000"></div>
<div class="abs" style="left:631px;top:271px;width:663px;height:2px;background:#000"></div>
<div class="abs" style="left:960px;top:147px;width:2px;height:636px;background:#000"></div>
<div class="abs" style="left:325px;top:150px;width:96px;height:87px;border:1px solid #8b93a3"></div>
<div class="t" style="left:326px;top:154.0px;line-height:13px;font-size:12px">View Status</div>
<div class="t" style="left:326px;top:166.9px;line-height:13px;font-size:12px">NODEID:</div>
<div class="t" style="left:326px;top:179.8px;line-height:13px;font-size:12px"> NODE11X</div>
<div class="t" style="left:326px;top:192.7px;line-height:13px;font-size:12px">CORRELATION:</div>
<div class="t" style="left:326px;top:205.6px;line-height:13px;font-size:12px"> 0.0</div>
<svg class="abs" style="left:0;top:0" width="640" height="242" shape-rendering="crispEdges"><path d="M448.5 205.5V239M462.5 205.5V239M448.0 205.5H463.0M476.5 202.5V239M490.5 202.5V239M476.0 202.5H491.0M455.5 200.5V205.5M483.5 200.5V202.5M455.0 200.5H484.0M434.5 196.5V239M469.5 196.5V200.5M434.0 196.5H470.0M504.5 211.5V239M518.5 211.5V239M504.0 211.5H519.0M546.5 208.5V239M560.5 208.5V239M546.0 208.5H561.0M532.5 206.5V239M553.5 206.5V208.5M532.0 206.5H554.0M574.5 203.5V239M588.5 203.5V239M574.0 203.5H589.0M542.5 197.5V206.5M581.5 197.5V203.5M542.0 197.5H582.0M511.5 175.5V211.5M561.5 175.5V197.5M511.0 175.5H562.0M451.5 148.5V196.5M536.5 148.5V175.5M451.0 148.5H537.0" stroke="#ff0000" stroke-width="1" fill="none"/></svg>
<div class="abs" style="left:605px;top:148px;width:15px;height:91px;background:#d6d9df"></div><div class="abs" style="left:605px;top:148px;width:15px;height:17px;background:linear-gradient(90deg,#c9ccd2 0,#eef0f2 12%,#e4e6ea 60%,#d4d7dc 100%);border-left:1px solid #aeb2bb"></div><div class="abs" style="left:605px;top:222px;width:15px;height:17px;background:linear-gradient(90deg,#c9ccd2 0,#eef0f2 12%,#e4e6ea 60%,#d4d7dc 100%);border-left:1px solid #aeb2bb"></div><div class="abs" style="left:605px;top:165px;width:15px;height:57px;border-radius:0 10px 10px 0/0 12px 12px 0;background:linear-gradient(90deg,#70727a 0,#9fa1a9 15%,#bfc1c8 40%,#cfd1d7 75%,#d3d5db 100%);box-shadow:inset 0 5px 4px -3px #4c4e55, inset 0 -5px 4px -3px #4c4e55"></div><svg class="abs" style="left:605px;top:148px" width="15" height="91"><path d="M4.5 12.5h7l-3.5 -7z" fill="#4b4b4b"/><path d="M4.5 78.5h7l-3.5 7z" fill="#4b4b4b"/></svg>
<svg class="abs" style="left:0;top:0" width="424" height="768" shape-rendering="crispEdges"><path d="M390.5 244V247M402.5 246V250M409.5 248V251M384.5 245V255M389.5 252V258M397.5 255V260M409.5 254V257M409.5 258V262M372.5 250V290M373.5 264V316M399.5 267V281M409.5 266V270M405.5 275V287M408.5 281V293M409.5 286V299M390.5 274V319M383.5 296V335M393.5 314V324M402.5 319V328M409.5 326V329M409.5 330V333M388.5 331V338M399.5 335V341M409.5 339V342M344.5 269V345M323.5 321V345M352.5 344V345M390 244.5H423M402 246.5H423M409 248.5H423M409 250.5H423M390 246.5H403M402 249.5H410M384 245.5H391M389 252.5H423M409 254.5H423M409 256.5H423M397 255.5H410M409 258.5H423M409 261.5H423M397 259.5H410M389 257.5H398M384 254.5H390M372 250.5H385M373 264.5H423M344 269.5H373M409 266.5H423M409 269.5H423M399 267.5H410M405 275.5H423M408 281.5H423M405 286.5H423M409 298.5H423M399 280.5H406M390 274.5H400M383 296.5H391M373 315.5H384M393 314.5H423M402 319.5H423M409 326.5H423M409 328.5H423M402 327.5H410M393 323.5H403M390 318.5H394M409 330.5H423M409 332.5H423M388 331.5H410M399 335.5H423M409 338.5H423M409 341.5H423M399 339.5H410M388 337.5H400M383 334.5H389M352 344.5H423M323 321.5H345M323.5 344V445M344.5 344V373M352.5 344V402M358.5 347V445M371.5 367V445M375.5 351V385M381.5 371V399M395.5 362V381M405.5 358V368M409.5 366V370M398.5 375V386M409.5 374V378M405.5 383V388M409.5 386V390M391.5 395V402M409.5 394V397M402.5 399V404M409.5 402V405M389.5 414V442M402.5 409V420M409.5 407V412M409.5 415V424M383.5 427V445M396.5 433V445M398.5 437V445M409.5 432V435M409.5 436V439M395.5 346V349M395 346.5H423M395 348.5H423M358 347.5H396M375 351.5H423M344 372.5H353M352 401.5H359M371 367.5H376M375 384.5H382M405 358.5H423M409 366.5H423M409 369.5H423M405 367.5H410M395 362.5H406M381 371.5H396M409 374.5H423M409 377.5H423M398 375.5H410M395 380.5H399M405 383.5H423M409 386.5H423M409 389.5H423M405 387.5H410M398 385.5H406M409 394.5H423M409 396.5H423M391 395.5H410M402 399.5H423M409 402.5H423M409 404.5H423M402 403.5H410M391 401.5H403M381 398.5H392M409 407.5H423M409 411.5H423M402 409.5H410M409 415.5H423M409 423.5H423M402 419.5H410M389 414.5H403M383 427.5H390M389 441.5H397M396 433.5H410M409 432.5H423M409 434.5H423M398 437.5H410M409 436.5H423M409 438.5H423M323.5 444V545M358.5 444V456M371.5 444V543M383.5 444V513M374.5 470V545M396.5 444V450M398.5 444V463M405.5 453V472M409.5 470V474M384.5 498V527M389.5 489V508M400.5 481V498M409.5 478V486M409.5 495V500M400.5 503V513M409.5 502V505M404.5 509V516M409.5 514V518M387.5 521V532M409.5 520V523M401.5 525V538M409.5 524V528M409.5 531V544M396 449.5H399M358 455.5H372M398 462.5H406M405 453.5H423M409 470.5H423M409 473.5H423M405 471.5H410M374 470.5H384M371 542.5H375M384 498.5H390M389 489.5H401M400 481.5H410M409 478.5H423M409 485.5H423M400 497.5H410M409 495.5H423M409 499.5H423M389 507.5H401M400 503.5H410M409 502.5H423M409 504.5H423M400 512.5H405M404 509.5H423M404 515.5H410M409 514.5H423M409 517.5H423M384 526.5H388M387 521.5H410M409 520.5H423M409 522.5H423M387 531.5H402M401 525.5H410M409 524.5H423M409 527.5H423M401 537.5H410M409 531.5H423M409 543.5H423M323.5 544V645M374.5 544V616M375.5 561V645M386.5 554V569M393.5 560V578M396.5 557V564M409.5 556V559M409.5 561V566M394.5 571V584M409.5 570V573M396.5 575V593M409.5 574V577M402.5 580V605M409.5 578V584M406.5 593V616M409.5 590V598M409.5 606V625M375 561.5H387M386 554.5H423M386 568.5H394M393 560.5H397M396 557.5H410M409 556.5H423M409 558.5H423M396 563.5H410M409 561.5H423M409 565.5H423M393 577.5H395M394 571.5H410M409 570.5H423M409 572.5H423M394 583.5H397M396 575.5H410M409 574.5H423M409 576.5H423M396 592.5H403M402 580.5H410M409 578.5H423M409 583.5H423M402 604.5H407M406 593.5H410M409 590.5H423M409 597.5H423M406 615.5H410M409 606.5H423M409 624.5H423M323.5 644V717M375.5 644V669M383.5 654V684M398.5 651V658M409.5 650V653M402.5 655V660M409.5 658V661M393.5 670V697M400.5 663V678M409.5 662V666M403.5 671V684M409.5 668V675M409.5 682V686M398.5 691V702M409.5 690V693M409.5 695V708M375 668.5H384M383 654.5H399M398 651.5H410M409 650.5H423M409 652.5H423M398 657.5H403M402 655.5H423M402 659.5H410M409 658.5H423M409 660.5H423M383 683.5H394M393 670.5H401M400 663.5H410M409 662.5H423M409 665.5H423M400 677.5H404M403 671.5H410M409 668.5H423M409 674.5H423M403 683.5H410M409 682.5H423M409 685.5H423M393 696.5H399M398 691.5H410M409 690.5H423M409 692.5H423M398 701.5H410M409 695.5H423M409 707.5H423M323.5 716V768M343.5 726V768M367.5 719V735M370.5 723V745M379.5 733V757M388.5 729V739M398.5 735V742M404.5 740V744M409.5 742V746M409.5 733V738M387.5 750V763M391.5 748V754M402.5 751V756M409.5 754V757M391.5 759V766M402.5 763V768M409.5 758V761M409.5 718V721M388.5 722V726M409.5 724V727M409.5 728V731M343 726.5H368M367 719.5H410M409 718.5H423M409 720.5H423M367 734.5H371M370 723.5H389M388 722.5H423M388 725.5H410M409 724.5H423M409 726.5H423M370 744.5H380M379 733.5H389M388 729.5H410M409 728.5H423M409 730.5H423M388 738.5H399M398 735.5H410M409 733.5H423M409 737.5H423M398 741.5H405M404 740.5H423M404 743.5H410M409 742.5H423M409 745.5H423M379 756.5H388M387 750.5H392M391 748.5H423M391 753.5H403M402 751.5H423M402 755.5H410M409 754.5H423M409 756.5H423M387 762.5H392M391 759.5H410M409 758.5H423M409 760.5H423M391 765.5H403M402 763.5H423M409 766.5H423" stroke="#ff0000" stroke-width="1" fill="none"/></svg>
<div class="abs" style="left:323px;top:767px;width:100px;height:15px;background:#d6d9df"></div><div class="abs" style="left:323px;top:767px;width:17px;height:15px;background:linear-gradient(180deg,#c9ccd2 0,#eef0f2 12%,#e4e6ea 60%,#d4d7dc 100%);border-top:1px solid #aeb2bb"></div><div class="abs" style="left:406px;top:767px;width:17px;height:15px;background:linear-gradient(180deg,#c9ccd2 0,#eef0f2 12%,#e4e6ea 60%,#d4d7dc 100%);border-top:1px solid #aeb2bb"></div><div class="abs" style="left:340px;top:767px;width:66px;height:15px;border-radius:0 0 12px 12px/0 0 10px 10px;background:linear-gradient(180deg,#70727a 0,#9fa1a9 15%,#bfc1c8 40%,#cfd1d7 75%,#d3d5db 100%);box-shadow:inset 5px 0 4px -3px #4c4e55, inset -5px 0 4px -3px #4c4e55"></div><svg class="abs" style="left:323px;top:767px" width="100" height="15"><path d="M12.5 4.5v7l-7 -3.5z" fill="#4b4b4b"/><path d="M87.5 4.5v7l7 -3.5z" fill="#4b4b4b"/></svg>
<svg class="abs" style="left:427px;top:243px" width="168" height="524" shape-rendering="crispEdges"><rect width="168" height="524" fill="#00ff00"/><path d="M140 0h14v2h-14zM28 0h14v4h-14zM56 0h14v8h-14zM98 0h14v8h-14zM42 0h14v20h-14zM154 0h14v20h-14zM0 0h14v36h-14zM14 2h14v20h-14zM140 6h14v4h-14zM126 8h14v4h-14zM28 8h14v6h-14zM56 10h14v10h-14zM140 14h14v6h-14zM28 16h14v70h-14zM98 20h14v2h-14zM56 22h14v6h-14zM42 24h14v46h-14zM14 28h14v58h-14zM56 36h14v70h-14zM112 42h14v2h-14zM0 42h14v58h-14zM70 70h14v12h-14zM42 72h14v12h-14zM84 72h14v14h-14zM42 86h14v4h-14zM140 88h14v2h-14zM112 90h14v4h-14zM14 90h14v12h-14zM42 96h14v4h-14zM84 100h14v2h-14zM140 100h14v2h-14zM154 100h14v4h-14zM70 102h14v4h-14zM112 102h14v8h-14zM98 104h14v46h-14zM0 106h14v4h-14zM154 106h14v4h-14zM112 122h14v2h-14zM154 122h14v16h-14zM140 130h14v2h-14zM126 130h14v20h-14zM28 138h14v4h-14zM112 142h14v2h-14zM70 150h14v2h-14zM112 150h14v4h-14zM126 154h14v8h-14zM112 158h14v4h-14zM140 160h14v2h-14zM28 162h14v8h-14zM42 162h14v26h-14zM0 166h14v8h-14zM70 188h14v4h-14zM0 188h14v46h-14zM154 190h14v2h-14zM126 192h14v2h-14zM28 192h14v4h-14zM140 226h14v2h-14zM56 226h14v8h-14zM140 234h14v2h-14zM14 234h14v26h-14zM42 250h14v8h-14zM56 254h14v8h-14zM28 258h14v18h-14zM84 270h14v2h-14zM14 270h14v6h-14zM42 276h14v4h-14zM154 276h14v4h-14zM56 276h14v34h-14zM14 278h14v2h-14zM70 280h14v2h-14zM84 280h14v6h-14zM42 286h14v6h-14zM98 310h14v2h-14zM126 310h14v2h-14zM84 310h14v24h-14zM70 310h14v36h-14zM112 312h14v4h-14zM126 314h14v2h-14zM140 316h14v10h-14zM112 320h14v6h-14zM154 326h14v4h-14zM112 328h14v2h-14zM0 330h14v2h-14zM14 330h14v4h-14zM98 334h14v2h-14zM0 346h14v2h-14zM84 346h14v72h-14zM28 362h14v2h-14zM70 362h14v44h-14zM98 406h14v2h-14zM140 406h14v12h-14zM154 406h14v40h-14zM112 410h14v4h-14zM126 414h14v4h-14zM112 416h14v2h-14zM0 418h14v6h-14zM140 420h14v18h-14zM28 424h14v2h-14zM84 438h14v2h-14zM84 446h14v2h-14zM126 446h14v4h-14zM140 446h14v68h-14zM70 450h14v6h-14zM70 474h28v4h-28zM112 474h14v4h-14zM28 474h14v10h-14zM14 474h14v12h-14zM56 474h14v22h-14zM0 474h14v50h-14zM126 476h14v42h-14zM42 478h14v4h-14zM98 478h14v28h-14zM112 480h14v24h-14zM154 480h14v44h-14zM42 484h14v4h-14zM70 484h14v26h-14zM84 484h14v40h-14zM28 488h14v4h-14zM14 488h14v36h-14zM28 496h28v2h-28zM28 500h14v24h-14zM42 504h28v20h-28zM112 506h14v6h-14zM70 514h14v2h-14zM98 514h28v10h-28zM70 518h14v4h-14zM140 518h14v6h-14z" fill="#800000"/><rect x="1" y="81" width="166" height="1" fill="#00ffff"/><rect x=".5" y=".5" width="167" height="524" fill="none" stroke="#ffff00" stroke-width="1"/></svg>
<div class="abs" style="left:605px;top:243px;width:15px;height:524px;background:#d6d9df"></div><div class="abs" style="left:605px;top:243px;width:15px;height:17px;background:linear-gradient(90deg,#c9ccd2 0,#eef0f2 12%,#e4e6ea 60%,#d4d7dc 100%);border-left:1px solid #aeb2bb"></div><div class="abs" style="left:605px;top:750px;width:15px;height:17px;background:linear-gradient(90deg,#c9ccd2 0,#eef0f2 12%,#e4e6ea 60%,#d4d7dc 100%);border-left:1px solid #aeb2bb"></div><div class="abs" style="left:605px;top:260px;width:15px;height:490px;border-radius:0 10px 10px 0/0 12px 12px 0;background:linear-gradient(90deg,#70727a 0,#9fa1a9 15%,#bfc1c8 40%,#cfd1d7 75%,#d3d5db 100%);box-shadow:inset 0 5px 4px -3px #4c4e55, inset 0 -5px 4px -3px #4c4e55"></div><div class="abs" style="left:605px;top:260px;width:15px;height:397px;border-radius:0 9px 9px 0/0 12px 12px 0;border:1px solid #2a4563;border-left:none;background:linear-gradient(90deg,#e8f0f7 0,#b3c9de 14%,#c3d8ea 55%,#dff0fa 100%)"></div><svg class="abs" style="left:605px;top:243px" width="15" height="524"><path d="M4.5 12.5h7l-3.5 -7z" fill="#4b4b4b"/><path d="M4.5 511.5h7l-3.5 7z" fill="#4b4b4b"/></svg>
<div class="abs" style="left:427px;top:767px;width:194px;height:15px;background:#d6d9df"></div><div class="abs" style="left:427px;top:767px;width:17px;height:15px;background:linear-gradient(180deg,#c9ccd2 0,#eef0f2 12%,#e4e6ea 60%,#d4d7dc 100%);border-top:1px solid #aeb2bb"></div><div class="abs" style="left:604px;top:767px;width:17px;height:15px;background:linear-gradient(180deg,#c9ccd2 0,#eef0f2 12%,#e4e6ea 60%,#d4d7dc 100%);border-top:1px solid #aeb2bb"></div><div class="abs" style="left:444px;top:767px;width:160px;height:15px;border-radius:0 0 12px 12px/0 0 10px 10px;background:linear-gradient(180deg,#70727a 0,#9fa1a9 15%,#bfc1c8 40%,#cfd1d7 75%,#d3d5db 100%);box-shadow:inset 5px 0 4px -3px #4c4e55, inset -5px 0 4px -3px #4c4e55"></div><svg class="abs" style="left:427px;top:767px" width="194" height="15"><path d="M12.5 4.5v7l-7 -3.5z" fill="#4b4b4b"/><path d="M181.5 4.5v7l7 -3.5z" fill="#4b4b4b"/></svg>
<div class="abs" style="left:635.5px;top:238.500px;transform-origin:0 0;transform:rotate(-90deg);white-space:pre;font-family:'Liberation Mono',monospace;font-size:10.1px;line-height:11px;height:11px;letter-spacing:0;-webkit-text-stroke:.3px #000">LC[LYMPHOMA]</div>
<div class="abs" style="left:647.5px;top:238.500px;transform-origin:0 0;transform:rotate(-90deg);white-space:pre;font-family:'Liberation Mono',monospace;font-size:10.1px;line-height:11px;height:11px;letter-spacing:0;-webkit-text-stroke:.3px #000">LA[LYMPHOMA]</div>
<div class="abs" style="left:659.5px;top:238.500px;transform-origin:0 0;transform:rotate(-90deg);white-space:pre;font-family:'Liberation Mono',monospace;font-size:10.1px;line-height:11px;height:11px;letter-spacing:0;-webkit-text-stroke:.3px #000">LB[LYMPHOMA]</div>
<div class="abs" style="left:671.5px;top:238.500px;transform-origin:0 0;transform:rotate(-90deg);white-space:pre;font-family:'Liberation Mono',monospace;font-size:10.1px;line-height:11px;height:11px;letter-spacing:0;-webkit-text-stroke:.3px #000">LD[LYMPHOMA]</div>
<div class="abs" style="left:683.5px;top:238.500px;transform-origin:0 0;transform:rotate(-90deg);white-space:pre;font-family:'Liberation Mono',monospace;font-size:10.1px;line-height:11px;height:11px;letter-spacing:0;-webkit-text-stroke:.3px #000">LE[LYMPHOMA]</div>
<div class="abs" style="left:695.5px;top:238.500px;transform-origin:0 0;transform:rotate(-90deg);white-space:pre;font-family:'Liberation Mono',monospace;font-size:10.1px;line-height:11px;height:11px;letter-spacing:0;-webkit-text-stroke:.3px #000">HA[HEALTHY]</div>
<div class="abs" style="left:707.5px;top:238.500px;transform-origin:0 0;transform:rotate(-90deg);white-space:pre;font-family:'Liberation Mono',monospace;font-size:10.1px;line-height:11px;height:11px;letter-spacing:0;-webkit-text-stroke:.3px #000">HB[HEALTHY]</div>
<div class="abs" style="left:719.5px;top:238.500px;transform-origin:0 0;transform:rotate(-90deg);white-space:pre;font-family:'Liberation Mono',monospace;font-size:10.1px;line-height:11px;height:11px;letter-spacing:0;-webkit-text-stroke:.3px #000">MD[MYELOMA]</div>
<div class="abs" style="left:731.5px;top:238.500px;transform-origin:0 0;transform:rotate(-90deg);white-space:pre;font-family:'Liberation Mono',monospace;font-size:10.1px;line-height:11px;height:11px;letter-spacing:0;-webkit-text-stroke:.3px #000">MA[MYELOMA]</div>
<div class="abs" style="left:743.5px;top:238.500px;transform-origin:0 0;transform:rotate(-90deg);white-space:pre;font-family:'Liberation Mono',monospace;font-size:10.1px;line-height:11px;height:11px;letter-spacing:0;-webkit-text-stroke:.3px #000">ME[MYELOMA]</div>
<div class="abs" style="left:755.5px;top:238.500px;transform-origin:0 0;transform:rotate(-90deg);white-space:pre;font-family:'Liberation Mono',monospace;font-size:10.1px;line-height:11px;height:11px;letter-spacing:0;-webkit-text-stroke:.3px #000">MB[MYELOMA]</div>
<div class="abs" style="left:767.5px;top:238.500px;transform-origin:0 0;transform:rotate(-90deg);white-space:pre;font-family:'Liberation Mono',monospace;font-size:10.1px;line-height:11px;height:11px;letter-spacing:0;-webkit-text-stroke:.3px #000">MC[MYELOMA]</div>
<svg class="abs" style="left:0;top:0" width="960" height="272" shape-rendering="crispEdges"><path d="M650.5 260.5V270M662.5 260.5V270M650.0 260.5H663.0M674.5 259.5V270M686.5 259.5V270M674.0 259.5H687.0M656.5 258.5V260.5M680.5 258.5V259.5M656.0 258.5H681.0M638.5 257.5V270M668.5 257.5V258.5M638.0 257.5H669.0" stroke="#f5aa78" stroke-width="1" fill="none"/><path d="M698.5 261.5V270M710.5 261.5V270M698.0 261.5H711.0" stroke="#9db7e0" stroke-width="1" fill="none"/><path d="M734.5 261.5V270M746.5 261.5V270M734.0 261.5H747.0M722.5 260.5V270M740.5 260.5V261.5M722.0 260.5H741.0M758.5 259.5V270M770.5 259.5V270M758.0 259.5H771.0M731.5 257.5V260.5M764.5 257.5V259.5M731.0 257.5H765.0" stroke="#a4dcb6" stroke-width="1" fill="none"/><path d="M704.5 251.5V261.5M747.5 251.5V257.5M704.0 251.5H748.0M653.5 243.5V257.5M725.5 243.5V251.5M653.0 243.5H726.0" stroke="#000" stroke-width="1" fill="none"/></svg>
<div class="abs" style="left:944px;top:243px;width:15px;height:27px;background:#d6d9df"></div><div class="abs" style="left:944px;top:243px;width:15px;height:9px;background:linear-gradient(90deg,#c9ccd2 0,#eef0f2 12%,#e4e6ea 60%,#d4d7dc 100%);border-left:1px solid #aeb2bb"></div><div class="abs" style="left:944px;top:261px;width:15px;height:9px;background:linear-gradient(90deg,#c9ccd2 0,#eef0f2 12%,#e4e6ea 60%,#d4d7dc 100%);border-left:1px solid #aeb2bb"></div><div class="abs" style="left:944px;top:252px;width:15px;height:9px;clip-path:polygon(0 0,70% 0,100% 50%,70% 100%,0 100%);background:linear-gradient(90deg,#a2a4ac 0,#c2c4ca 30%,#d2d4da 100%);box-shadow:inset 0 3px 3px -2px #6a6c74, inset 0 -3px 3px -2px #6a6c74"></div><svg class="abs" style="left:944px;top:243px" width="15" height="27"><path d="M5.0 7.0h6l-3.0 -4z" fill="#4b4b4b"/><path d="M5.0 20.0h6l-3.0 4z" fill="#4b4b4b"/></svg>
<svg class="abs" style="left:632px;top:274px" width="144" height="492" shape-rendering="crispEdges"><rect width="144" height="492" fill="#00ff00"/><path d="M0 0h12v12h-12zM24 0h36v12h-36zM84 0h12v12h-12zM120 0h24v12h-24zM0 12h60v12h-60zM84 12h12v12h-12zM132 12h12v12h-12zM0 24h24v12h-24zM36 24h24v12h-24zM84 24h12v12h-12zM132 24h12v12h-12zM0 36h24v12h-24zM36 36h24v12h-24zM84 36h12v12h-12zM120 36h24v12h-24zM0 48h48v12h-48zM108 48h36v12h-36zM0 60h60v12h-60zM108 60h12v12h-12zM132 60h12v12h-12zM0 72h60v12h-60zM132 72h12v12h-12zM0 84h24v12h-24zM36 84h24v12h-24zM120 84h24v12h-24zM0 96h60v12h-60zM120 96h24v12h-24zM0 108h60v12h-60zM120 108h24v12h-24zM0 120h36v12h-36zM84 120h12v12h-12zM0 132h12v12h-12zM24 132h12v12h-12zM48 132h12v12h-12zM0 144h12v12h-12zM24 144h36v12h-36zM0 156h12v12h-12zM24 156h36v12h-36zM0 168h48v12h-48zM0 180h48v12h-48zM0 192h48v12h-48zM0 204h48v12h-48zM12 216h48v12h-48zM12 228h48v12h-48zM12 240h48v12h-48zM0 252h60v12h-60zM96 252h12v12h-12zM0 264h60v12h-60zM0 276h60v12h-60zM0 288h60v12h-60zM0 300h60v12h-60zM0 312h60v12h-60zM0 324h60v12h-60zM0 336h60v12h-60zM0 348h60v12h-60zM0 360h60v12h-60zM0 372h60v12h-60zM0 384h60v12h-60zM0 396h60v12h-60zM0 408h60v12h-60zM0 420h36v12h-36zM48 420h24v12h-24zM0 432h84v12h-84zM0 444h84v12h-84zM0 456h84v12h-84zM0 468h84v12h-84zM0 480h84v12h-84z" fill="#800000"/></svg>
<div class="abs" style="left:944px;top:274px;width:15px;height:493px;background:#d6d9df"></div><div class="abs" style="left:944px;top:274px;width:15px;height:17px;background:linear-gradient(90deg,#c9ccd2 0,#eef0f2 12%,#e4e6ea 60%,#d4d7dc 100%);border-left:1px solid #aeb2bb"></div><div class="abs" style="left:944px;top:750px;width:15px;height:17px;background:linear-gradient(90deg,#c9ccd2 0,#eef0f2 12%,#e4e6ea 60%,#d4d7dc 100%);border-left:1px solid #aeb2bb"></div><div class="abs" style="left:944px;top:291px;width:15px;height:459px;border-radius:0 10px 10px 0/0 12px 12px 0;background:linear-gradient(90deg,#70727a 0,#9fa1a9 15%,#bfc1c8 40%,#cfd1d7 75%,#d3d5db 100%);box-shadow:inset 0 5px 4px -3px #4c4e55, inset 0 -5px 4px -3px #4c4e55"></div><div class="abs" style="left:944px;top:291px;width:15px;height:56px;border-radius:0 9px 9px 0/0 12px 12px 0;border:1px solid #2a4563;border-left:none;background:linear-gradient(90deg,#e8f0f7 0,#b3c9de 14%,#c3d8ea 55%,#dff0fa 100%)"></div><svg class="abs" style="left:944px;top:274px" width="15" height="493"><path d="M4.5 12.5h7l-3.5 -7z" fill="#4b4b4b"/><path d="M4.5 480.5h7l-3.5 7z" fill="#4b4b4b"/></svg>
<div class="abs" style="left:632px;top:767px;width:327px;height:15px;background:#d6d9df"></div><div class="abs" style="left:632px;top:767px;width:17px;height:15px;background:linear-gradient(180deg,#c9ccd2 0,#eef0f2 12%,#e4e6ea 60%,#d4d7dc 100%);border-top:1px solid #aeb2bb"></div><div class="abs" style="left:942px;top:767px;width:17px;height:15px;background:linear-gradient(180deg,#c9ccd2 0,#eef0f2 12%,#e4e6ea 60%,#d4d7dc 100%);border-top:1px solid #aeb2bb"></div><div class="abs" style="left:649px;top:767px;width:293px;height:15px;border-radius:0 0 12px 12px/0 0 10px 10px;background:linear-gradient(180deg,#70727a 0,#9fa1a9 15%,#bfc1c8 40%,#cfd1d7 75%,#d3d5db 100%);box-shadow:inset 5px 0 4px -3px #4c4e55, inset -5px 0 4px -3px #4c4e55"></div><svg class="abs" style="left:632px;top:767px" width="327" height="15"><path d="M12.5 4.5v7l-7 -3.5z" fill="#4b4b4b"/><path d="M314.5 4.5v7l7 -3.5z" fill="#4b4b4b"/></svg>
<div class="abs" style="left:963px;top:275.700px;white-space:pre;font-family:'Liberation Mono',monospace;font-size:11px;line-height:12px;letter-spacing:.4px">2385.1929
3153.7146
1020.47687
2485.1306
2147.0474
1467.7797
1650.8407
2618.3127
1927.9261
2959.6863
1263.6294
1449.7738
683.36597
1015.605
1938.8624
2258.2056
2607.1567
3212.1606
3237.253
635.37067
1706.9425
1913.0648
3032.6636
3259.9922
3292.8242
605.2612
640.40656
667.3745
1274.7123
1592.0046
1687.5967
1709.1057
2084.0527
2190.1394
2612.381
1497.7217
1427.6404
1641.8474
2982.5278
1244.7972
1299.5529</div>
<div class="abs" style="left:965px;top:150px;width:326px;height:118px;border:1px solid #8b93a3"></div>
<div class="t" style="left:966px;top:154.0px;line-height:13px;font-size:12px;letter-spacing:0.3px">Usage Hints</div>
<div class="t" style="left:966px;top:166.9px;line-height:13px;font-size:12px;letter-spacing:0.1px">Click to select node</div>
<div class="t" style="left:964.8px;top:179.8px;line-height:13px;font-size:12px;letter-spacing:0.07px"> - use arrow keys to navigate tree</div>
<div class="t" style="left:8px;top:787px;letter-spacing:-.1px">AIBench</div>
</body></html>
